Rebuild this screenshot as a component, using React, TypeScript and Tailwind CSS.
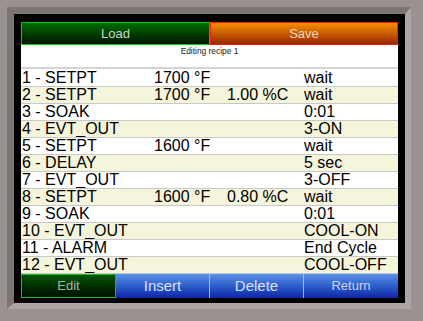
import React from "react";

const rows: [string, string, string, string][] = [
  ["1 - SETPT", "1700 °F", "", "wait"],
  ["2 - SETPT", "1700 °F", "1.00 %C", "wait"],
  ["3 - SOAK", "", "", "0:01"],
  ["4 - EVT_OUT", "", "", "3-ON"],
  ["5 - SETPT", "1600 °F", "", "wait"],
  ["6 - DELAY", "", "", "5 sec"],
  ["7 - EVT_OUT", "", "", "3-OFF"],
  ["8 - SETPT", "1600 °F", "0.80 %C", "wait"],
  ["9 - SOAK", "", "", "0:01"],
  ["10 - EVT_OUT", "", "", "COOL-ON"],
  ["11 - ALARM", "", "", "End Cycle"],
  ["12 - EVT_OUT", "", "", "COOL-OFF"],
];

export default function App() {
  return (
    <div
      className="w-[423px] h-[321px] bg-[#9a9191] pt-[7px] pl-[7px] pr-[12px] pb-[12px]"
      style={{ fontFamily: '"Liberation Sans", Arial, sans-serif' }}
    >
      <div className="w-full h-full border-t-[7px] border-l-[7px] border-r-[6px] border-b-[6px] border-t-[#7d7474] border-l-[#7d7474] border-r-[#ada5a5] border-b-[#ada5a5]">
        <div className="w-full h-full bg-black pt-[8px] pl-[7px] pr-[7px] pb-[5px]">
          <div className="w-full h-full bg-white flex flex-col">
            <div className="flex h-[23px]">
              <div className="w-[189px] flex items-center justify-center border border-[#00d000] bg-gradient-to-b from-[#006c00] to-[#001800] text-[13px] text-[#c8d8c8]">
                Load
              </div>
              <div className="flex-1 flex items-center justify-center border border-[#ff1a00] bg-gradient-to-b from-[#f39000] to-[#9a2400] text-[13px] text-[#f4d8c0]">
                Save
              </div>
            </div>
            <div className="h-[22px] flex justify-center">
              <span className="text-[8.4px] leading-[10px] mt-[1px] text-[#202020]">Editing recipe 1</span>
            </div>
            <div className="h-[2px] bg-[#d4d4d4]" />
            <div className="flex flex-col">
              {rows.map((r, i) => (
                <div
                  key={i}
                  className={`h-[17px] ${i > 0 ? "border-t border-[#c8c8c8]" : "pt-[1px]"} ${i % 2 === 1 ? "bg-[#f5f5dc]" : "bg-white"} grid grid-cols-[133px_73px_77px_1fr] text-[16px] leading-[16px] text-black`}
                >
                  <span className="pl-[1px] whitespace-nowrap">{r[0]}</span>
                  <span className="whitespace-nowrap">{r[1]}</span>
                  <span className="whitespace-nowrap">{r[2]}</span>
                  <span className="whitespace-nowrap">{r[3]}</span>
                </div>
              ))}
            </div>
            <div className="h-[1px] bg-[#c8c8c8]" />
            <div className="flex flex-1">
              <div className="w-[95px] flex items-center justify-center border border-[#18c018] bg-gradient-to-b from-[#005400] to-[#001000] text-[13px] text-[#aab4aa]">
                Edit
              </div>
              <div className="w-[94px] flex items-center justify-center border-r border-[#8cc0f4] bg-gradient-to-b from-[#5b90ea] to-[#1022a8] text-[15px] text-[#d8e2f8]">
                Insert
              </div>
              <div className="w-[94px] flex items-center justify-center border-r border-[#8cc0f4] bg-gradient-to-b from-[#5b90ea] to-[#1022a8] text-[15px] text-[#d8e2f8]">
                Delete
              </div>
              <div className="flex-1 flex items-center justify-center bg-gradient-to-b from-[#5b90ea] to-[#1022a8] text-[13px] text-[#c8d4f0]">
                Return
              </div>
            </div>
          </div>
        </div>
      </div>
    </div>
  );
}
